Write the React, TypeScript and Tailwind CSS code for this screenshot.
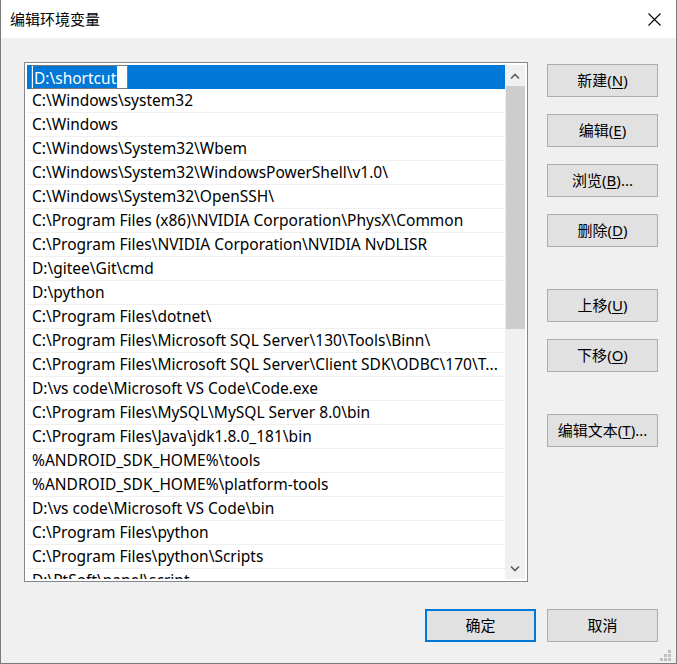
import React from "react";

const paths = [
  "D:\\shortcut",
  "C:\\Windows\\system32",
  "C:\\Windows",
  "C:\\Windows\\System32\\Wbem",
  "C:\\Windows\\System32\\WindowsPowerShell\\v1.0\\",
  "C:\\Windows\\System32\\OpenSSH\\",
  "C:\\Program Files (x86)\\NVIDIA Corporation\\PhysX\\Common",
  "C:\\Program Files\\NVIDIA Corporation\\NVIDIA NvDLISR",
  "D:\\gitee\\Git\\cmd",
  "D:\\python",
  "C:\\Program Files\\dotnet\\",
  "C:\\Program Files\\Microsoft SQL Server\\130\\Tools\\Binn\\",
  "C:\\Program Files\\Microsoft SQL Server\\Client SDK\\ODBC\\170\\T...",
  "D:\\vs code\\Microsoft VS Code\\Code.exe",
  "C:\\Program Files\\MySQL\\MySQL Server 8.0\\bin",
  "C:\\Program Files\\Java\\jdk1.8.0_181\\bin",
  "%ANDROID_SDK_HOME%\\tools",
  "%ANDROID_SDK_HOME%\\platform-tools",
  "D:\\vs code\\Microsoft VS Code\\bin",
  "C:\\Program Files\\python",
  "C:\\Program Files\\python\\Scripts",
  "D:\\PtSoft\\panel\\script",
];

function Btn({
  label,
  hotkey,
  tail = "",
  className = "",
}: {
  label: string;
  hotkey?: string;
  tail?: string;
  className?: string;
}) {
  return (
    <button
      className={`w-[111px] h-[33px] bg-[#e1e1e1] border border-[#adadad] text-[15px] text-black flex items-center justify-center ${className}`}
    >
      <span>
        {label}
        {hotkey && (
          <>
            (<span className="underline underline-offset-2">{hotkey}</span>)
          </>
        )}
        {tail}
      </span>
    </button>
  );
}

export default function App() {
  return (
    <div
      className="w-[677px] h-[664px] flex flex-col bg-[#f0f0f0] border-x border-b border-[#7a7a7a] relative select-none"
      style={{ fontFamily: '"Noto Sans", "Noto Sans CJK SC", sans-serif' }}
    >
      {/* Title bar */}
      <div className="h-[38px] bg-white flex items-center justify-between pl-[9px] pr-[15px] shrink-0">
        <span className="text-[15px] text-black">编辑环境变量</span>
        <svg width="13" height="13" viewBox="0 0 13 13">
          <path d="M0.5 0.5 L12.5 12.5 M12.5 0.5 L0.5 12.5" stroke="#000" strokeWidth="1.1" />
        </svg>
      </div>

      {/* Body */}
      <div className="flex-1 flex flex-col pl-[23px] pt-[24px] pr-[18px]">
        <div className="flex">
          {/* List box */}
          <div className="w-[504px] h-[520px] border border-[#828790] bg-white p-[2px] flex">
            <div className="w-[478px] h-full overflow-hidden">
              {paths.map((p, i) =>
                i === 0 ? (
                  <div key={i} className="h-[24px] bg-[#0078d7] flex items-stretch pl-[4px]">
                    <div className="h-[24px] w-[97px] border border-[#7a7a7a] bg-white flex items-center pl-[1px]">
                      <span className="bg-[#0078d7] text-white text-[15.5px] leading-[22px] h-[22px] pt-[1px] px-[1px] whitespace-nowrap">
                        {p}
                      </span>
                    </div>
                  </div>
                ) : (
                  <div
                    key={i}
                    className="h-[24px] border-b border-[#f0f0f0] pl-[5px] pt-[1px] flex items-center text-[15.5px] text-black whitespace-nowrap overflow-hidden"
                  >
                    {p}
                  </div>
                )
              )}
            </div>
            {/* Scrollbar */}
            <div className="w-[20px] h-full bg-[#f0f0f0] flex flex-col">
              <div className="h-[21px] flex items-center justify-center">
                <svg width="10" height="6" viewBox="0 0 10 6">
                  <path d="M1 5.5 L5 1.5 L9 5.5" stroke="#606060" strokeWidth="1.6" fill="none" />
                </svg>
              </div>
              <div className="h-[243px] bg-[#cdcdcd] ml-[1px]" />
              <div className="flex-1" />
              <div className="h-[21px] flex items-center justify-center">
                <svg width="10" height="6" viewBox="0 0 10 6">
                  <path d="M1 0.5 L5 4.5 L9 0.5" stroke="#606060" strokeWidth="1.6" fill="none" />
                </svg>
              </div>
            </div>
          </div>

          {/* Side buttons */}
          <div className="ml-[19px] pt-[2px] flex flex-col">
            <Btn label="新建" hotkey="N" />
            <Btn label="编辑" hotkey="E" className="mt-[17px]" />
            <Btn label="浏览" hotkey="B" tail="..." className="mt-[17px]" />
            <Btn label="删除" hotkey="D" className="mt-[17px]" />
            <Btn label="上移" hotkey="U" className="mt-[42px]" />
            <Btn label="下移" hotkey="O" className="mt-[17px]" />
            <Btn label="编辑文本" hotkey="T" tail="..." className="mt-[42px]" />
          </div>
        </div>

        {/* Bottom buttons */}
        <div className="mt-[27px] flex justify-end gap-[11px]">
          <button className="w-[111px] h-[33px] bg-[#e1e1e1] border-2 border-[#0078d7] text-[15px] text-black">
            确定
          </button>
          <Btn label="取消" />
        </div>
      </div>

      {/* Resize grip */}
      <svg className="absolute right-[5px] bottom-[2px]" width="11" height="11" viewBox="0 0 11 11">
        <g fill="#bfbfbf">
          <rect x="8" y="0" width="3" height="3" />
          <rect x="4" y="4" width="3" height="3" />
          <rect x="8" y="4" width="3" height="3" />
          <rect x="0" y="8" width="3" height="3" />
          <rect x="4" y="8" width="3" height="3" />
          <rect x="8" y="8" width="3" height="3" />
        </g>
      </svg>
    </div>
  );
}
